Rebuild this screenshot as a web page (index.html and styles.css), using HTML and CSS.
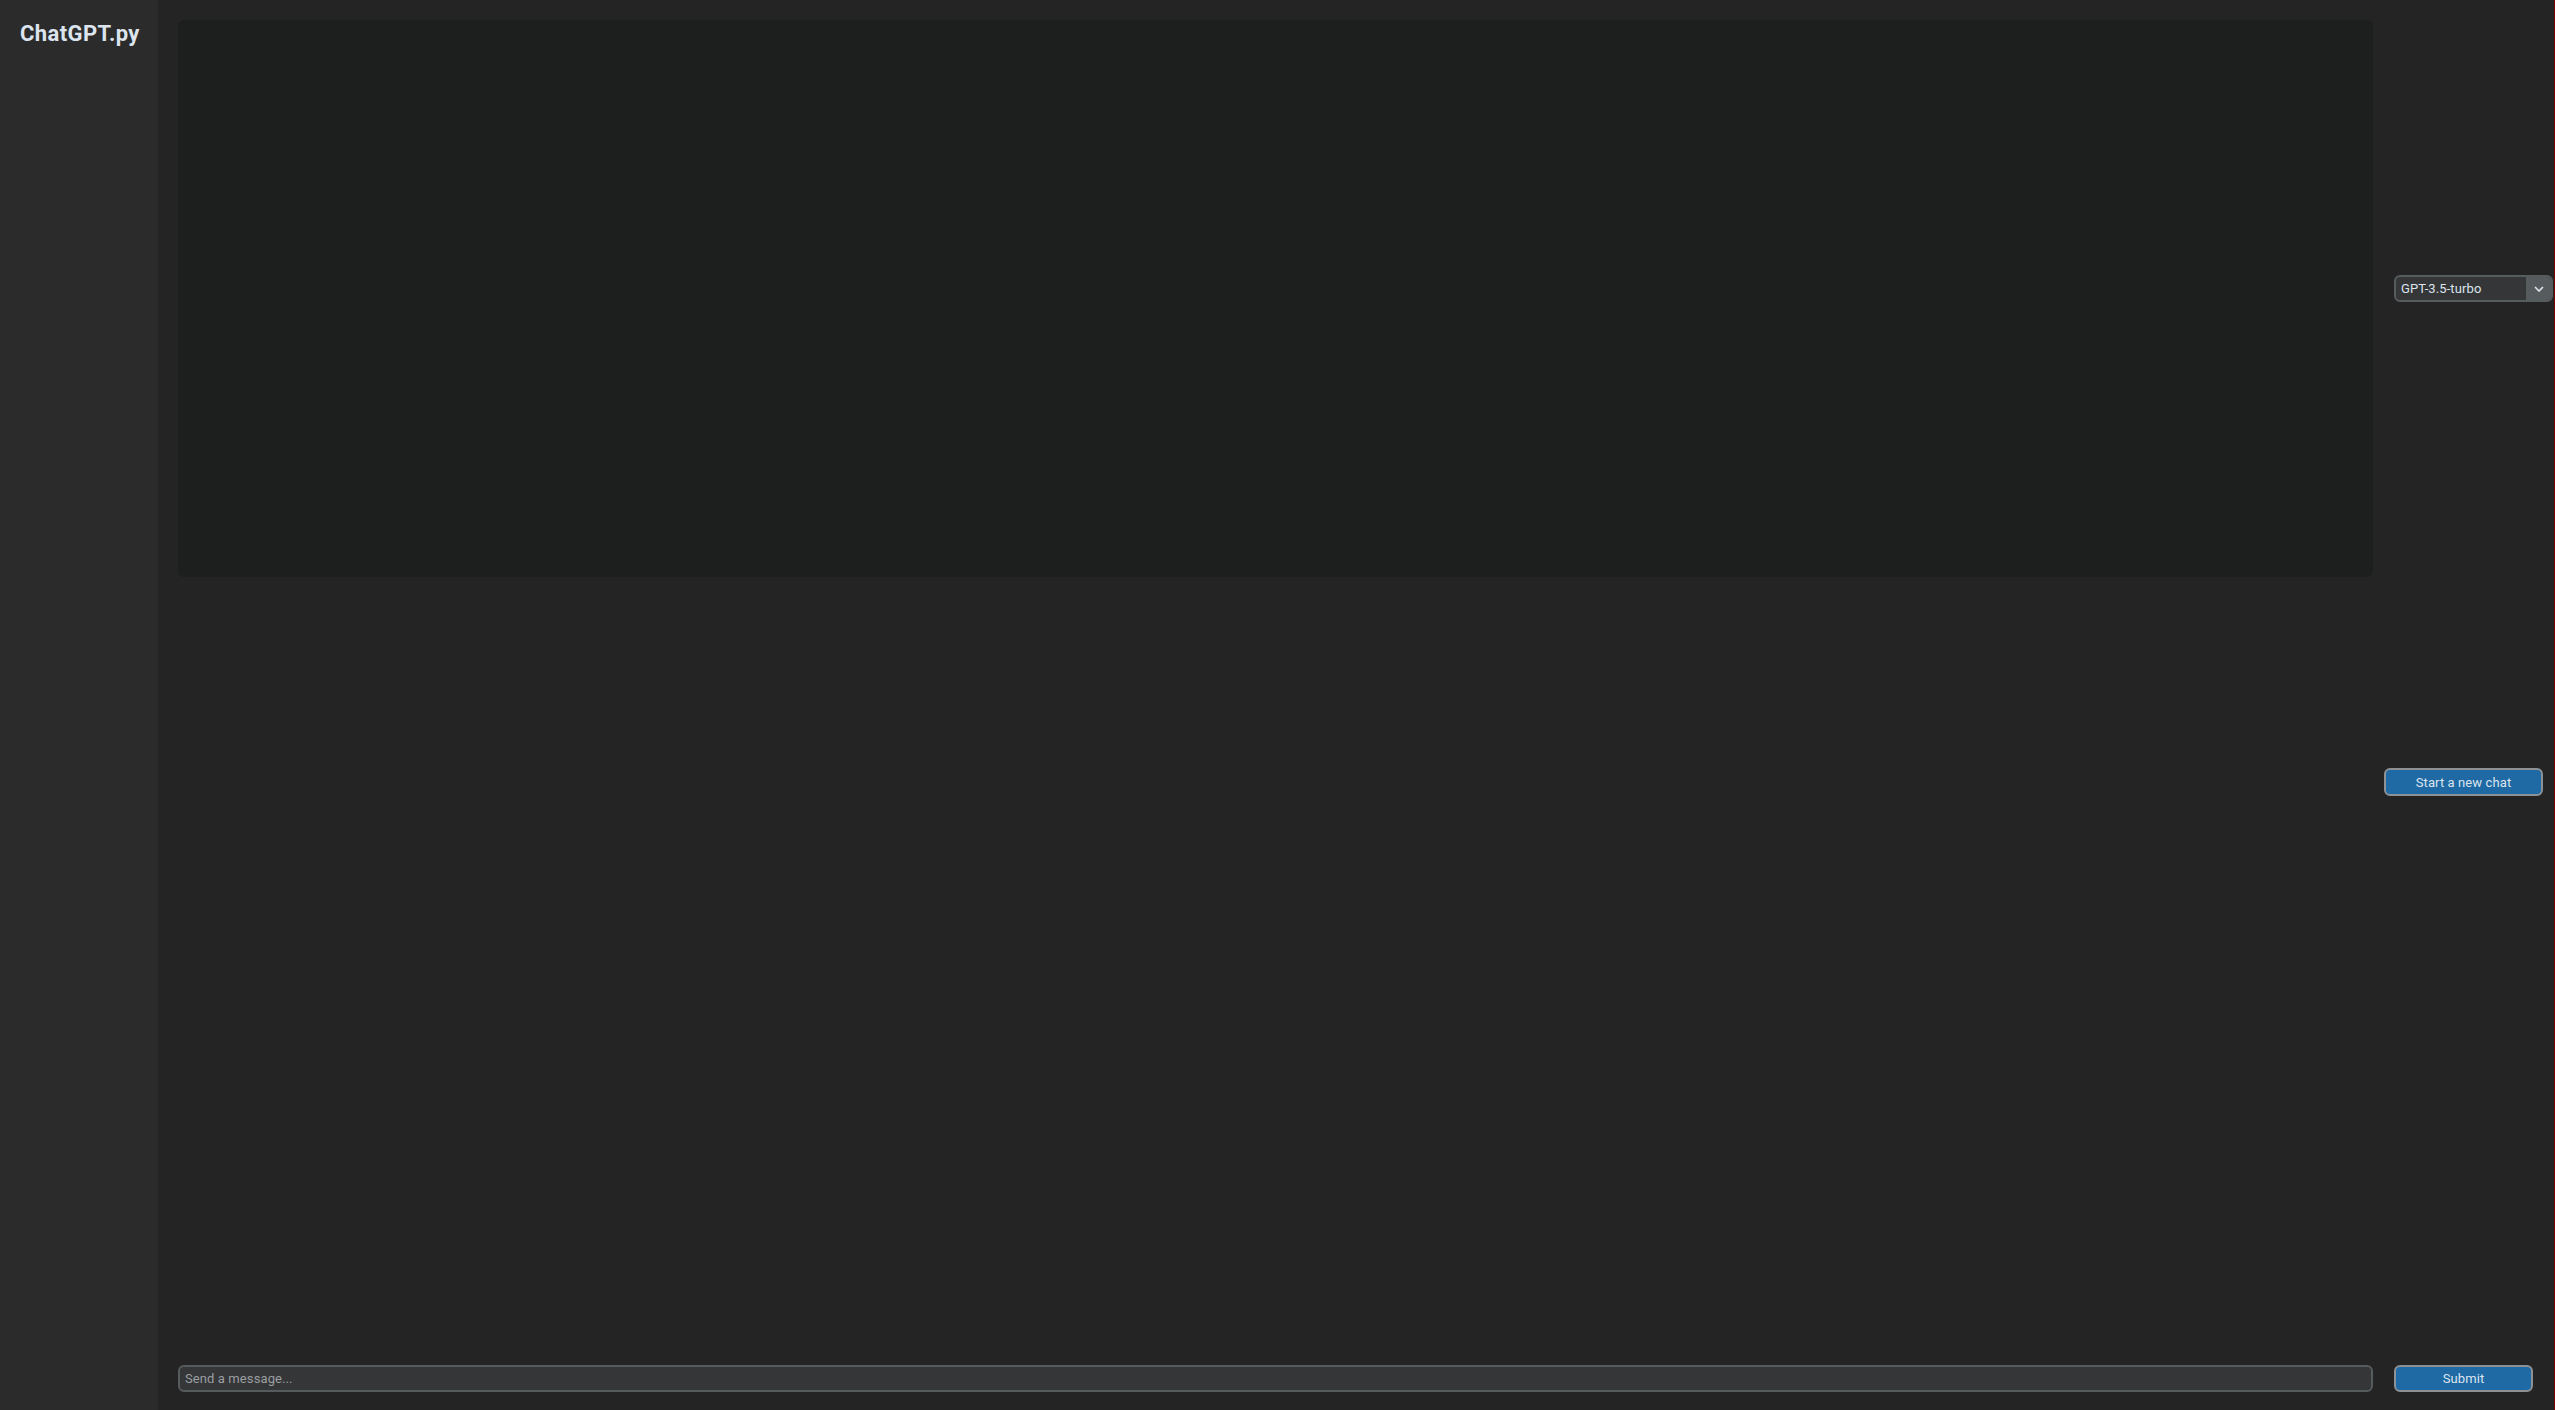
FILE: index.html
```html
<!DOCTYPE html>
<html lang="en">
<head>
    <meta charset="UTF-8">
    <meta name="viewport" content="width=device-width, initial-scale=1.0">
    <title>ChatGPT.py</title>
    <link rel="stylesheet" href="styles.css">
</head>
<body>
    <div class="app">
        <aside class="sidebar">
            <h1 class="logo">ChatGPT.py</h1>
        </aside>
        <main class="main">
            <div class="chat-box"></div>
            <div class="options">
                <div class="combo">
                    <span class="combo-value">GPT-3.5-turbo</span>
                    <span class="combo-arrow">
                        <svg width="10" height="6" viewBox="0 0 10 6"><path d="M1 1 L5 5 L9 1" fill="none" stroke="#dce4ee" stroke-width="1.6"/></svg>
                    </span>
                </div>
                <button class="btn new-chat">Start a new chat</button>
            </div>
            <input class="entry" type="text" placeholder="Send a message...">
            <button class="btn submit">Submit</button>
        </main>
    </div>
</body>
</html>
```

FILE: styles.css
```css
body {
    margin: 0;
    padding: 0;
    background-color: #242424;
    font-family: Roboto, "Liberation Sans", sans-serif;
    color: #dce4ee;
}

.app {
    display: flex;
    height: 1410px;
}

.sidebar {
    width: 158px;
    background-color: #2b2b2b;
    flex-shrink: 0;
}

.logo {
    margin: 0;
    padding: 21px 0 0 20px;
    font-size: 22px;
    font-weight: bold;
    letter-spacing: 0.4px;
    line-height: 26px;
    color: #dce4ee;
}

.main {
    flex: 1;
    display: grid;
    grid-template-columns: 1fr 181px;
    grid-template-rows: 557px 1fr 27px;
    padding: 20px 0 18px 20px;
    border-right: 1px solid #7a0000;
}

.chat-box {
    grid-column: 1;
    grid-row: 1;
    background-color: #1d1e1e;
    border-radius: 6px;
}

.options {
    grid-column: 2;
    grid-row: 1 / 3;
    display: flex;
    flex-direction: column;
    align-items: flex-start;
}

.combo {
    margin: 255px 0 0 21px;
    width: 159px;
    height: 27px;
    box-sizing: border-box;
    display: flex;
    background-color: #343638;
    border: 2px solid #565b5e;
    border-radius: 6px;
    overflow: hidden;
}

.combo-value {
    flex: 1;
    padding-left: 5px;
    font-size: 13px;
    letter-spacing: 0.1px;
    line-height: 23px;
}

.combo-arrow {
    width: 25px;
    background-color: #565b5e;
    display: flex;
    align-items: center;
    justify-content: center;
}

.btn {
    height: 28px;
    box-sizing: border-box;
    background-color: #1f6aa5;
    color: #dce4ee;
    border: 2px solid #8c9196;
    border-radius: 6px;
    font-family: Roboto, "Liberation Sans", sans-serif;
    font-size: 13px;
    letter-spacing: 0.1px;
    cursor: pointer;
    padding: 0;
}

.new-chat {
    margin: 466px 0 0 11px;
    width: 159px;
}

.entry {
    grid-column: 1;
    grid-row: 3;
    height: 27px;
    box-sizing: border-box;
    background-color: #343638;
    border: 2px solid #565b5e;
    border-radius: 6px;
    color: #dce4ee;
    font-family: Roboto, "Liberation Sans", sans-serif;
    font-size: 13px;
    letter-spacing: 0.1px;
    padding: 0 5px;
    outline: none;
}

.entry::placeholder {
    color: #9b9ea1;
}

.submit {
    grid-column: 2;
    grid-row: 3;
    margin-left: 21px;
    width: 139px;
    height: 27px;
}
```
